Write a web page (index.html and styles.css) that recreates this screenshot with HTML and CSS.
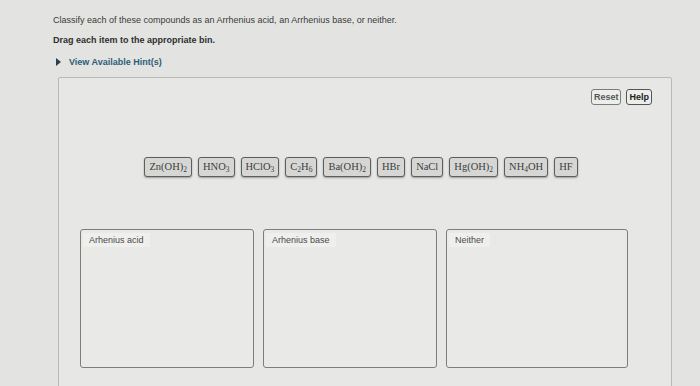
FILE: index.html
```html
<html lang="en">
<head>
    <title>Arrhenius Classification</title>
    <meta charset="UTF-8">
    <meta name="viewport" content="width=device-width, initial-scale=1.0">
    <link rel="stylesheet" href="styles.css">
</head>

<body>
    <div class="intro">
        <p class="question">Classify each of these compounds as an Arrhenius acid, an Arrhenius base, or neither.</p>
        <p class="instructions">Drag each item to the appropriate bin.</p>
        <p class="hints"><span class="arrow"></span>View Available Hint(s)</p>
    </div>

    <div class="panel">
        <div class="tools">
            <button class="toolButton">Reset</button>
            <button class="toolButton">Help</button>
        </div>

        <div class="items">
            <span class="chip">Zn(OH)<sub>2</sub></span>
            <span class="chip">HNO<sub>3</sub></span>
            <span class="chip">HClO<sub>3</sub></span>
            <span class="chip">C<sub>2</sub>H<sub>6</sub></span>
            <span class="chip">Ba(OH)<sub>2</sub></span>
            <span class="chip">HBr</span>
            <span class="chip">NaCl</span>
            <span class="chip">Hg(OH)<sub>2</sub></span>
            <span class="chip">NH<sub>4</sub>OH</span>
            <span class="chip">HF</span>
        </div>

        <div class="bins">
            <div class="bin"><span class="binLabel">Arhenius acid</span></div>
            <div class="bin"><span class="binLabel">Arhenius base</span></div>
            <div class="bin wide"><span class="binLabel">Neither</span></div>
        </div>
    </div>
</body>
</html>
```

FILE: styles.css
```css
body {
    margin: 0;
    font-family: "Liberation Sans", Arial, sans-serif;
    background-color: #e3e4e1;
    color: #2b2b2b;
    overflow: hidden;
}

.intro {
    padding: 14px 0 0 53px;
}

.intro p {
    margin: 0;
    font-size: 9px;
    line-height: 12px;
}

.question {
    color: #3a3a3a;
}

.instructions {
    margin-top: 8px !important;
    font-weight: bold;
    color: #2e2e2e;
}

.hints {
    margin-top: 10px !important;
    font-weight: bold;
    color: #2f5d78;
    display: flex;
    align-items: center;
}

.arrow {
    width: 0;
    height: 0;
    margin: 0 8px 0 3px;
    border-top: 4px solid transparent;
    border-bottom: 4px solid transparent;
    border-left: 5px solid #2b3f4f;
}

.panel {
    margin: 9px 0 0 58px;
    width: 612px;
    height: 320px;
    border: 1px solid #b9bab7;
    border-radius: 2px;
    background-color: #e7e8e5;
}

.tools {
    display: flex;
    justify-content: flex-end;
    gap: 5px;
    padding: 11px 19px 0 0;
}

.toolButton {
    font-family: "Liberation Sans", Arial, sans-serif;
    font-size: 9px;
    font-weight: bold;
    color: #555;
    background-color: #eceeeb;
    border: 1px solid #7c7d7a;
    border-radius: 3px;
    padding: 2px 2px;
    height: 16px;
    line-height: 10px;
}

.toolButton + .toolButton {
    color: #222;
    border-color: #555;
}

.items {
    display: flex;
    justify-content: center;
    gap: 6px;
    margin: 52px 0 0 -8px;
}

.chip {
    display: inline-block;
    font-family: "Liberation Serif", "Times New Roman", serif;
    font-size: 10.5px;
    line-height: 18px;
    height: 18px;
    color: #3c3c3c;
    background-color: #d6d7d4;
    border: 1.5px solid #5d5e5c;
    border-radius: 3px;
    box-shadow: 0 1px 2px #9a9b98;
    padding: 0 4px;
}

.chip sub {
    font-size: 7.5px;
    vertical-align: -2px;
    line-height: 0;
}

.bins {
    display: grid;
    grid-template-columns: 174px 174px 182px;
    column-gap: 9px;
    margin: 52px 0 0 21px;
}

.bin {
    height: 137px;
    border: 1.5px solid #7d7e7b;
    border-radius: 3px;
    background-color: #e9eae7;
}

.binLabel {
    display: inline-block;
    margin: 3px 0 0 2px;
    padding: 2px 6px 2px 6px;
    font-size: 9px;
    color: #4a4a4a;
    background-color: #eff0ed;
}
```
